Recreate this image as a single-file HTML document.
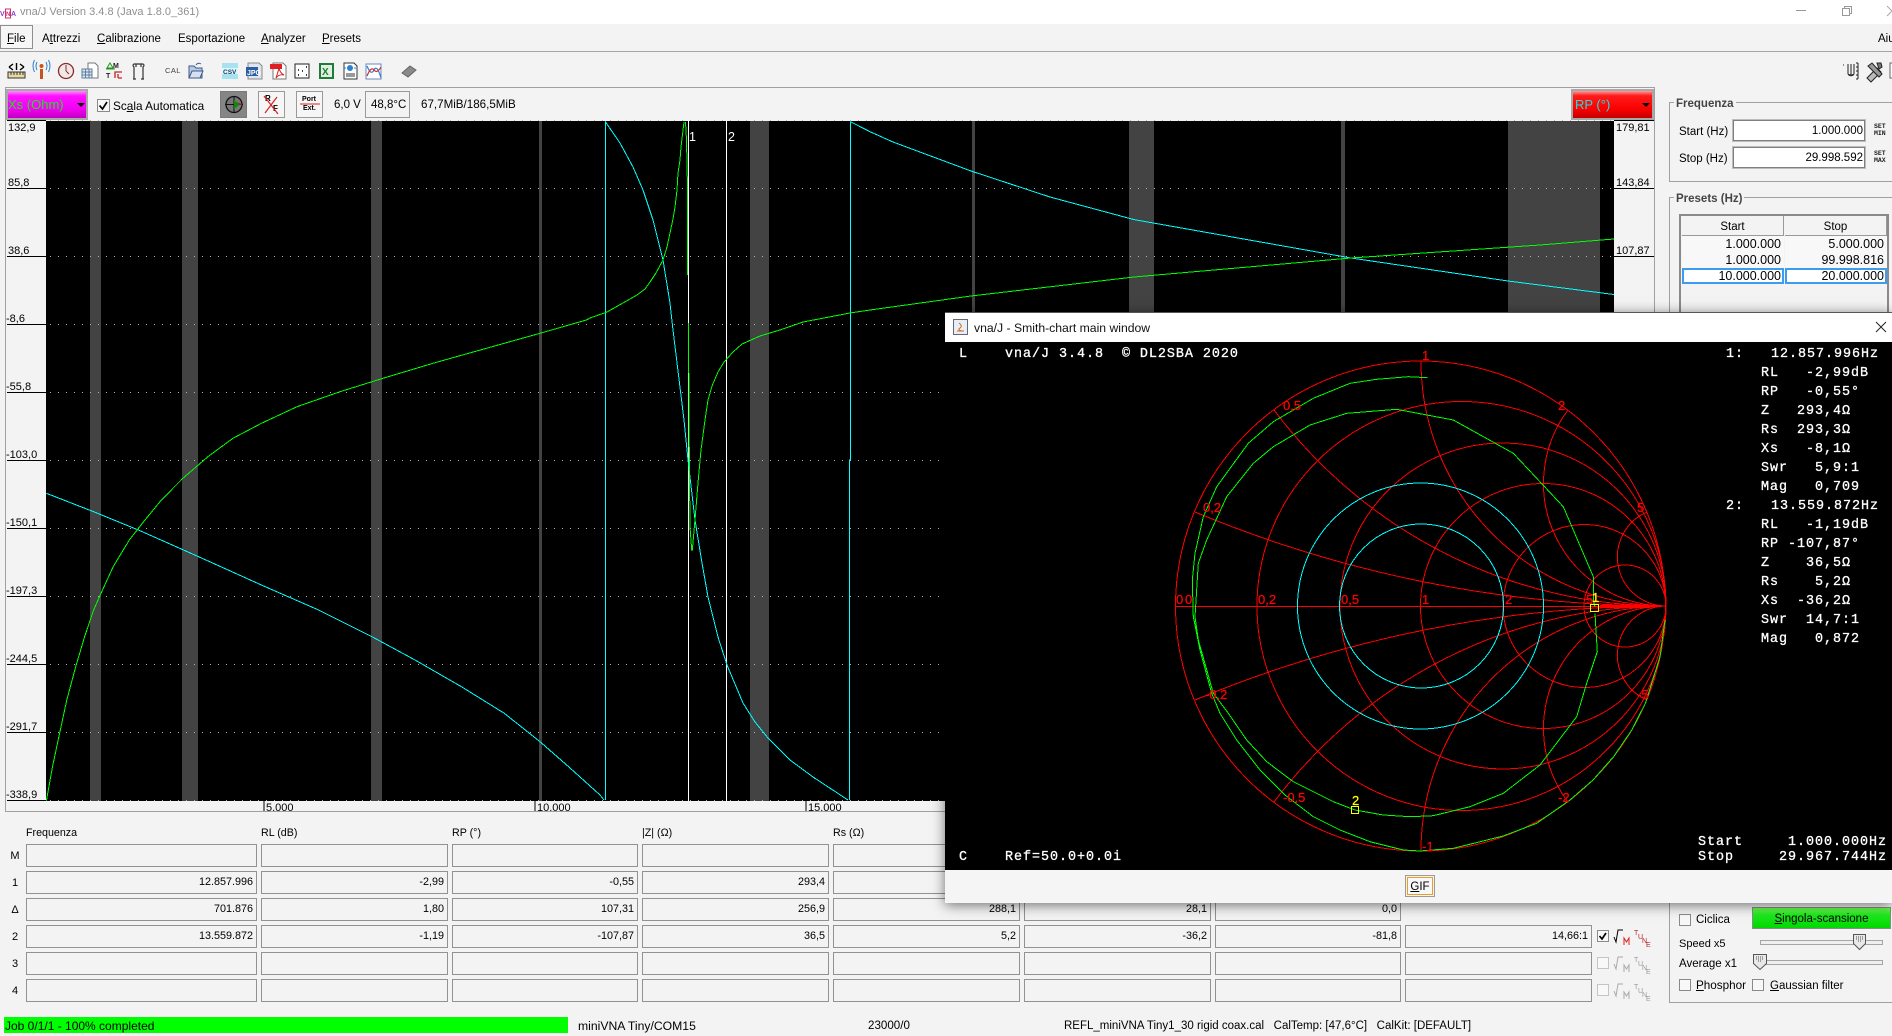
<!DOCTYPE html>
<html><head><meta charset="utf-8"><title>vna/J</title>
<style>
html,body{margin:0;padding:0;width:1892px;height:1036px;overflow:hidden;background:#f3f3f3}
body{position:relative;font-family:"Liberation Sans",sans-serif;font-size:11px;color:#000}
.a{position:absolute;box-sizing:border-box}
.t{position:absolute;white-space:pre;line-height:14px;font-size:11px}
.m{font-size:11.5px;top:32px}
.c{position:absolute;box-sizing:border-box;height:23px;border:1px solid #929292;background:#f3f3f3;text-align:right;padding-right:3px;font-size:10.8px;line-height:21px}
.h{top:826px;font-size:10.7px}
.rl{left:10px;width:10px;text-align:center;font-size:11px}
.cb{position:absolute;box-sizing:border-box;width:13px;height:13px;border:1px solid #8a8a8a;background:#f8f8f8}
.in{position:absolute;box-sizing:border-box;background:#fff;border:1px solid #7f7f7f;outline:1px solid #bdbdbd;text-align:right;padding-right:1px;font-size:11.5px;line-height:21px}
.lg{position:absolute;background:#f3f3f3;padding:0 2px;font-weight:bold;font-size:11.5px;line-height:14px;color:#444;white-space:pre}
.pc{position:absolute;box-sizing:border-box;height:16px;text-align:right;padding-right:3px;font-size:12.5px;line-height:17px;background:#f8f8f8}
svg{position:absolute;left:0;top:0}
.g text{font-family:"Liberation Sans",sans-serif}
.mono text{font-family:"Liberation Mono",monospace;font-size:13.4px;letter-spacing:.96px;fill:#fff;stroke:#fff;stroke-width:.3px;white-space:pre}
.red text{font-family:"Liberation Sans",sans-serif;font-size:13px;fill:#f00;stroke:#f00;stroke-width:.25px}
.red text.y{fill:#ff0;stroke:#ff0}
</style></head><body>

<!-- title bar -->
<div class="a" style="left:0;top:0;width:1892px;height:24px;background:#fff"></div>
<svg width="20" height="24" style="left:0;top:0"><text x="0" y="16" font-size="7" font-weight="bold" fill="#8b3fc4" font-family="Liberation Sans">V</text><rect x="5.5" y="9" width="5" height="9" fill="none" stroke="#d1306a"/><text x="6" y="16" font-size="6" font-weight="bold" fill="#d1306a" font-family="Liberation Sans">N</text><text x="11" y="16" font-size="7" font-weight="bold" fill="#8b3fc4" font-family="Liberation Sans">A</text></svg>
<div class="t" style="left:20px;top:5px;font-size:11px;color:#8f8f8f">vna/J Version 3.4.8 (Java 1.8.0_361)</div>
<svg width="1892" height="24"><path d="M1796 10.5h10" stroke="#999"/><path d="M1842.5 8.5h7v7h-7zM1844.5 8.5v-2h7v7h-2" fill="none" stroke="#999"/><path d="M1887 6l5 5M1887 16l5-5" stroke="#aaa"/></svg>

<!-- menu -->
<div class="a" style="left:0;top:25px;width:33px;height:24px;border:1px solid #8f8f8f;background:#f6f6f6"></div>
<div class="a" style="left:0;top:51px;width:1892px;height:1px;background:#a5a5a5"></div>
<div class="t m" style="left:7px"><u>F</u>ile</div>
<div class="t m" style="left:42px">A<u>t</u>trezzi</div>
<div class="t m" style="left:97px"><u>C</u>alibrazione</div>
<div class="t m" style="left:178px">Esportazione</div>
<div class="t m" style="left:261px"><u>A</u>nalyzer</div>
<div class="t m" style="left:322px"><u>P</u>resets</div>
<div class="t m" style="left:1878px">Aiuto</div>

<!-- toolbar icons -->
<svg width="1892" height="86" class="g">
 <g><path d="M8 72h17v6H8z" fill="#e8d9a0" stroke="#333"/><path d="M11 72v3M14 72v3M17 72v3M20 72v3M23 72v3" stroke="#333"/><path d="M9 67l4-3M9 67l4 3M24 67l-4-3M24 67l-4 3M16.5 63v7" stroke="#000" stroke-width="1.4" fill="none"/></g>
 <g><rect x="40" y="69" width="3" height="10" fill="#c8541c"/><circle cx="41.5" cy="66" r="2" fill="#c8541c"/><path d="M37 62q-2 4 0 8M34.5 60q-3 6 0 12M46 62q2 4 0 8M48.5 60q3 6 0 12" fill="none" stroke="#2c7fcf"/></g>
 <g><circle cx="66" cy="71" r="7.5" fill="#f2e8e8" stroke="#8a2b2b" stroke-width="1.3"/><path d="M66 71v-6M66 71l3 3" stroke="#8a2b2b"/></g>
 <g><path d="M88 63h7l3 3v12H88z" fill="#fff" stroke="#777"/><rect x="82" y="69" width="10" height="9" fill="#dfe7f0" stroke="#5f7f9f"/><path d="M82 72h10M82 75h10M85.5 69v9M89 69v9" stroke="#5f7f9f"/></g>
 <g font-size="7" font-weight="bold"><text x="113" y="68" fill="#222">M</text><path d="M107 68l3-5 3 5z" fill="none" stroke="#1a9c1a"/><path d="M106 69h9" stroke="#1a9c1a"/><text x="106" y="78" fill="#222">T</text><path d="M115 78v-6h7M118 78v-4M122 78h-4" fill="none" stroke="#c22" stroke-width="1.3"/></g>
 <path d="M134 79v-12q-2-2 0-3h9q2 1 0 3v12M133 79h3M141 79h3M136 64v3M141 64v3" fill="none" stroke="#333" stroke-width="1.2"/>
 <text x="165" y="73" font-size="7.5" letter-spacing=".4" fill="#444">CAL</text>
 <g><path d="M189 66h5l2 2h6v10h-13z" fill="#b9c9e3" stroke="#3c5a8a"/><path d="M189 78l3-7h11l-3 7z" fill="#d6e0f0" stroke="#3c5a8a"/><path d="M196 65q2-3 5-1" stroke="#3c5a8a" fill="none"/></g>
 <g><rect x="222" y="63" width="16" height="16" fill="#a6e3ef"/><rect x="222" y="68" width="16" height="6" fill="#dff6fa"/><text x="223" y="74" font-size="6.5" font-weight="bold" fill="#1a3a6a">CSV</text></g>
 <g><path d="M248 63h11l3 3v13h-14z" fill="#dde6f2" stroke="#888"/><rect x="246" y="67" width="12" height="9" fill="#2c5fa0"/><text x="247" y="75" font-size="7" font-weight="bold" fill="#fff">JPG</text></g>
 <g><path d="M273 63h10l3 3v13h-13z" fill="#fff" stroke="#777"/><rect x="270" y="64" width="12" height="5" fill="#e02020"/><path d="M276 78q2-6 3-10q1 5 5 7q-5-1-8 3z" fill="none" stroke="#d02020"/></g>
 <g><rect x="295" y="64" width="14" height="14" fill="#fff" stroke="#222"/><path d="M298 75h1M302 71h1M306 67h1M306 75h1M298 70h1" stroke="#000" stroke-width="1.6"/></g>
 <g><rect x="319" y="63" width="15" height="16" fill="#1f7a3c"/><rect x="321" y="65" width="11" height="12" fill="#dff0df"/><text x="322" y="75" font-size="10" font-weight="bold" fill="#1a7a30">X</text></g>
 <g><path d="M344 63h10l3 3v13h-13z" fill="#fff" stroke="#333"/><circle cx="350" cy="68" r="3" fill="#2c7fcf"/><path d="M346 74h9M346 76h9" stroke="#333"/><path d="M344 68h2M354 68h2" stroke="#2c7fcf"/></g>
 <g><rect x="366" y="64" width="15" height="15" fill="#fff" stroke="#6a8ac0"/><path d="M367 66q4 10 7 4t7 8" fill="none" stroke="#2c7fcf" stroke-width="1.2"/><path d="M367 76q4-10 7-6t7-3" fill="none" stroke="#d03030" stroke-width="1.2"/></g>
 <path d="M402 73l8-7 6 4-8 7z" fill="#8a8a8a" stroke="#666"/>
 <!-- right icons -->
 <g><path d="M1848 64v10M1851 64v10M1854 64v10" stroke="#222" stroke-width="1"/><path d="M1848 74a3.5 3.5 0 0 0 6 0" fill="#555" stroke="#222"/><path d="M1858 63h-2M1858 67h-2M1858 71h-2M1858 75h-2M1858 79h-2M1858 63v16" stroke="#222" fill="none"/><path d="M1843 65h1" stroke="#222"/></g>
 <g><path d="M1867 78l10-10 4 4-10 10z" fill="#bbb" stroke="#222"/><path d="M1868 66l4-3 10 11-3 3z" fill="#999" stroke="#222"/><path d="M1877 63l4 0 1 4-3 2z" fill="#777" stroke="#222"/></g>
 <rect x="1890" y="63" width="6" height="15" fill="#fff" stroke="#666"/>
</svg>

<!-- chart panel -->
<div class="a" style="left:5px;top:87px;width:1650px;height:725px;border:1px solid #a0a0a0;background:#f3f3f3"></div>
<!-- left combo -->
<div class="a" style="left:6px;top:89px;width:82px;height:31px;border:2px solid #a8a8a8;background:linear-gradient(#ff8cff 0,#ff10ff 18%,#f000f0 70%,#c000c0 100%)"></div>
<div class="t" style="left:8px;top:98px;font-size:13px;color:#22e022">Xs (Ohm)</div>
<svg width="100" height="120"><path d="M77 103h8l-4 4z" fill="#000"/></svg>
<div class="cb" style="left:97px;top:99px"></div>
<svg width="120" height="120"><path d="M99.5 105.5l3 3.5 4.5-7" fill="none" stroke="#000" stroke-width="1.7"/></svg>
<div class="t" style="left:113px;top:99px;font-size:11.8px">Sc<u>a</u>la Automatica</div>
<div class="a" style="left:220px;top:91px;width:27px;height:27px;border:1px solid #7a7a7a;background:#858585"></div>
<div class="a" style="left:258px;top:91px;width:27px;height:27px;border:1px solid #9a9a9a;background:#f6f6f6"></div>
<div class="a" style="left:296px;top:91px;width:27px;height:27px;border:1px solid #9a9a9a;background:#f6f6f6"></div>
<svg width="340" height="120" class="g">
 <circle cx="234" cy="104.5" r="8" fill="#777" stroke="#111" stroke-width="1.3"/><path d="M225 104.5h18M234 96v17" stroke="#111"/><path d="M234 100l6 4.5-6 4.5z" fill="#0c8a0c"/><path d="M238 103l4 2" stroke="#c11"/>
 <text x="265" y="101" font-size="8" font-weight="bold">R</text><text x="273" y="111" font-size="8" font-weight="bold">F</text><path d="M264 96l14 18M277 97l-12 16" stroke="#d22" stroke-width="1.2"/>
 <text x="302" y="101" font-size="7" font-weight="bold">Port</text><text x="303" y="110" font-size="7" font-weight="bold">Ext.</text><path d="M300 104h20" stroke="#d22"/>
</svg>
<div class="t" style="left:334px;top:98px;font-size:11.5px">6,0 V</div>
<div class="a" style="left:365px;top:91px;width:45px;height:27px;border:1px solid #9a9a9a"></div>
<div class="t" style="left:371px;top:98px;font-size:11.5px">48,8°C</div>
<div class="t" style="left:421px;top:98px;font-size:11.6px">67,7MiB/186,5MiB</div>
<!-- right combo -->
<div class="a" style="left:1571px;top:89px;width:83px;height:31px;border:2px solid #a8a8a8;background:linear-gradient(#ff9a9a 0,#ff1a1a 18%,#f80000 70%,#c00000 100%)"></div>
<div class="t" style="left:1575px;top:98px;font-size:13px;color:#22dddd">RP (°)</div>
<svg width="1660" height="120"><path d="M1642 103h8l-4 4z" fill="#000"/></svg>

<!-- chart -->
<div class="a" style="left:46px;top:121px;width:1568px;height:680px;background:#000"></div>
<svg width="1892" height="1036" class="g" shape-rendering="crispEdges">
 <g fill="#434343">
  <rect x="90" y="121" width="11" height="680"/><rect x="182" y="121" width="16" height="680"/><rect x="371" y="121" width="11" height="680"/><rect x="539" y="121" width="3" height="680"/><rect x="750" y="121" width="19" height="680"/><rect x="972" y="121" width="3" height="680"/><rect x="1129" y="121" width="25" height="680"/><rect x="1341" y="121" width="4" height="680"/><rect x="1508" y="121" width="92" height="680"/>
 </g>
 <g stroke="#b4b4b4" stroke-dasharray="1 7">
  <path d="M50 120.5H1614M50 188.5H1614M50 256.5H1614M50 324.5H1614M50 392.5H1614M50 460.5H1614M50 528.5H1614M50 596.5H1614M50 664.5H1614M50 732.5H1614M50 800.5H1614"/>
 </g>
 <g stroke="#000">
  <path d="M7 120.5H46M7 188.5H46M7 256.5H46M7 324.5H46M7 392.5H46M7 460.5H46M7 528.5H46M7 596.5H46M7 664.5H46M7 732.5H46M7 800.5H46"/>
  <path d="M1614 120.5H1654M1614 188.5H1654M1614 256.5H1654M1614 324.5H1654M1614 392.5H1654M1614 460.5H1654M1614 528.5H1654M1614 596.5H1654M1614 664.5H1654M1614 732.5H1654M1614 800.5H1654"/>
  <path d="M264 801v10M535 801v10M806 801v10"/>
 </g>
 <g stroke="#fff"><path d="M688.5 121V801M726.5 121V801"/></g>
 <g fill="none" stroke="#00ffff">
  <polyline points="46.4,493.3 93.6,511.7 140,530.7 197,556 261.4,585 318.6,610 372,636.7 415,660 461.4,686.7 504.3,713.3 540,741.7 568.6,766.7 600,795 604,800"/>
  <polyline points="605.5,800 605.5,122 620,143 633,167 643,190 653,220 663,260 670,303 673,330 684,420 688,460 695,520 702,563 708,597 718,637 727,665 743,703 755,722 768,738 790,760 813,777 848,800"/>
  <polyline points="849.5,800 849.5,460 850.5,460 850.5,121.7 870,131.7 893,142 971,171 1050,197 1134,219.6 1255,241 1351,258 1508,281 1614,294.5"/>
 </g>
 <g fill="none" stroke="#00ff00">
  <polyline points="46.4,800.7 52.5,766.7 59.6,733.3 66.8,700 75.7,666.7 84.6,636.7 93.6,610 102.5,590 113.2,566.7 129.3,540 143.6,521.7 161.4,500 182.9,478.3 207.9,456.7 232.9,438.3 261.4,423.3 297,406.7 340,391.7 382.9,378.3 432.9,363.3 486.4,348.3 540,333.3 586.4,320 590,318 607,312 623,303 637,295 645,289 650,282 656,273 663,260 667,247 670,233 673,219 675,207 677,190 678,173 680,160 681,147 684,122"/>
  <polyline points="685.5,122 686.5,140 687.5,188 687.5,275"/>
  <polyline points="688.5,323 689,420 690,527 691.7,550 692.3,550 695,520 698,483 701,450 705,420 708,400 712,386 718,372 724,362 733,352 742,344 760,336 780,330 803,322 850,313 870,310 971,296 1134,277 1351,258 1540,245 1614,239"/>
 </g>
</svg>
<svg width="1892" height="1036" class="g" font-size="11" fill="#000">
 <text x="689" y="141" fill="#fff" font-size="12.5">1</text><text x="728" y="141" fill="#fff" font-size="12.5">2</text>
 <text x="8" y="131">132,9</text><text x="8" y="186">85,8</text><text x="8" y="254">38,6</text><text x="6" y="322">-8,6</text><text x="6" y="390">-55,8</text><text x="6" y="458">-103,0</text><text x="6" y="526">-150,1</text><text x="6" y="594">-197,3</text><text x="6" y="662">-244,5</text><text x="6" y="730">-291,7</text><text x="6" y="798">-338,9</text>
 <text x="1616" y="131">179,81</text><text x="1616" y="186">143,84</text><text x="1616" y="254">107,87</text>
 <text x="266" y="811">5.000</text><text x="537" y="811">10.000</text><text x="808" y="811">15.000</text>
</svg>

<!-- table -->
<div class="t h" style="left:26px">Frequenza</div><div class="t h" style="left:261px">RL (dB)</div><div class="t h" style="left:452px">RP (°)</div><div class="t h" style="left:642px">|Z| (Ω)</div><div class="t h" style="left:833px">Rs (Ω)</div>
<div class="t rl" style="top:849px">M</div><div class="t rl" style="top:876px">1</div><div class="t rl" style="top:903px">Δ</div><div class="t rl" style="top:930px">2</div><div class="t rl" style="top:957px">3</div><div class="t rl" style="top:984px">4</div>

<!-- row M -->
<div class="c" style="left:26px;width:231px;top:844px"></div><div class="c" style="left:261px;width:187px;top:844px"></div><div class="c" style="left:452px;width:186px;top:844px"></div><div class="c" style="left:642px;width:187px;top:844px"></div><div class="c" style="left:833px;width:187px;top:844px"></div>
<!-- row 1 -->
<div class="c" style="left:26px;width:231px;top:871px">12.857.996</div><div class="c" style="left:261px;width:187px;top:871px">-2,99</div><div class="c" style="left:452px;width:186px;top:871px">-0,55</div><div class="c" style="left:642px;width:187px;top:871px">293,4</div><div class="c" style="left:833px;width:187px;top:871px"></div>
<!-- row delta -->
<div class="c" style="left:26px;width:231px;top:898px">701.876</div><div class="c" style="left:261px;width:187px;top:898px">1,80</div><div class="c" style="left:452px;width:186px;top:898px">107,31</div><div class="c" style="left:642px;width:187px;top:898px">256,9</div><div class="c" style="left:833px;width:187px;top:898px">288,1</div><div class="c" style="left:1024px;width:187px;top:898px">28,1</div><div class="c" style="left:1215px;width:186px;top:898px">0,0</div>
<!-- row 2 -->
<div class="c" style="left:26px;width:231px;top:925px">13.559.872</div><div class="c" style="left:261px;width:187px;top:925px">-1,19</div><div class="c" style="left:452px;width:186px;top:925px">-107,87</div><div class="c" style="left:642px;width:187px;top:925px">36,5</div><div class="c" style="left:833px;width:187px;top:925px">5,2</div><div class="c" style="left:1024px;width:187px;top:925px">-36,2</div><div class="c" style="left:1215px;width:186px;top:925px">-81,8</div><div class="c" style="left:1405px;width:187px;top:925px">14,66:1</div>
<!-- row 3 -->
<div class="c" style="left:26px;width:231px;top:952px"></div><div class="c" style="left:261px;width:187px;top:952px"></div><div class="c" style="left:452px;width:186px;top:952px"></div><div class="c" style="left:642px;width:187px;top:952px"></div><div class="c" style="left:833px;width:187px;top:952px"></div><div class="c" style="left:1024px;width:187px;top:952px"></div><div class="c" style="left:1215px;width:186px;top:952px"></div><div class="c" style="left:1405px;width:187px;top:952px"></div>
<!-- row 4 -->
<div class="c" style="left:26px;width:231px;top:979px"></div><div class="c" style="left:261px;width:187px;top:979px"></div><div class="c" style="left:452px;width:186px;top:979px"></div><div class="c" style="left:642px;width:187px;top:979px"></div><div class="c" style="left:833px;width:187px;top:979px"></div><div class="c" style="left:1024px;width:187px;top:979px"></div><div class="c" style="left:1215px;width:186px;top:979px"></div><div class="c" style="left:1405px;width:187px;top:979px"></div>

<div class="cb" style="left:1597px;top:930px;width:12px;height:12px"></div>
<div class="cb" style="left:1597px;top:957px;width:12px;height:12px;border-color:#c4c4c4"></div>
<div class="cb" style="left:1597px;top:984px;width:12px;height:12px;border-color:#c4c4c4"></div>
<svg width="1892" height="1036" class="g">
 <path d="M1599.5 936l2.5 3 4-6" fill="none" stroke="#000" stroke-width="1.7"/>
 <g><path d="M1614 937l2 5 2-12h5" fill="none" stroke="#000"/><path d="M1624 945v-7l2.5 4 2.5-4v7" fill="none" stroke="#d22"/><text x="1634" y="935" font-size="7" fill="#b22">T</text><text x="1638" y="939" font-size="7" fill="#b22">U</text><text x="1642" y="943" font-size="7" fill="#b22">N</text><text x="1646" y="947" font-size="7" fill="#b22">E</text></g>
 <g><path d="M1614 964l2 5 2-12h5" fill="none" stroke="#aaa"/><path d="M1624 972v-7l2.5 4 2.5-4v7" fill="none" stroke="#aaa"/><text x="1634" y="962" font-size="7" fill="#999">T</text><text x="1638" y="966" font-size="7" fill="#999">U</text><text x="1642" y="970" font-size="7" fill="#999">N</text><text x="1646" y="974" font-size="7" fill="#999">E</text></g>
 <g><path d="M1614 991l2 5 2-12h5" fill="none" stroke="#aaa"/><path d="M1624 999v-7l2.5 4 2.5-4v7" fill="none" stroke="#aaa"/><text x="1634" y="989" font-size="7" fill="#999">T</text><text x="1638" y="993" font-size="7" fill="#999">U</text><text x="1642" y="997" font-size="7" fill="#999">N</text><text x="1646" y="1001" font-size="7" fill="#999">E</text></g>
</svg>

<!-- status -->
<div class="a" style="left:4px;top:1017px;width:564px;height:16px;background:#00ff00"></div>
<div class="t" style="left:5px;top:1019px;font-size:12px">Job 0/1/1 - 100% completed</div>
<div class="t" style="left:578px;top:1019px;font-size:12.2px">miniVNA Tiny/COM15</div>
<div class="t" style="left:868px;top:1019px;font-size:11.6px">23000/0</div>
<div class="t" style="left:1064px;top:1019px;font-size:11.5px">REFL_miniVNA Tiny1_30 rigid coax.cal   CalTemp: [47,6°C]   CalKit: [DEFAULT]</div>

<!-- right panel: Frequenza -->
<div class="a" style="left:1669px;top:102px;width:240px;height:80px;border:1px solid #a0a0a0"></div>
<div class="lg" style="left:1674px;top:97px">Frequenza</div>
<div class="t" style="left:1679px;top:125px;font-size:11.5px">Start (Hz)</div>
<div class="in" style="left:1733px;top:120px;width:132px;height:21px">1.000.000</div>
<div class="t" style="left:1679px;top:152px;font-size:11.5px">Stop (Hz)</div>
<div class="in" style="left:1733px;top:147px;width:132px;height:21px">29.998.592</div>
<svg width="1892" height="180"><g font-family="Liberation Mono" font-size="6.5" font-weight="bold" fill="#222"><text x="1874" y="128">SET</text><text x="1874" y="135">MIN</text><text x="1874" y="155">SET</text><text x="1874" y="162">MAX</text></g></svg>

<!-- Presets -->
<div class="a" style="left:1669px;top:197px;width:240px;height:200px;border:1px solid #a0a0a0"></div>
<div class="lg" style="left:1674px;top:192px">Presets (Hz)</div>
<div class="a" style="left:1679px;top:214px;width:210px;height:110px;border:2px solid #8a8a8a;background:#f3f3f3"></div>
<div class="a" style="left:1682px;top:216px;width:102px;height:20px;background:#f3f3f3;border-right:1px solid #999;border-bottom:1px solid #999;text-align:center;font-size:11.5px;line-height:22px">Start</div>
<div class="a" style="left:1785px;top:216px;width:102px;height:20px;background:#f3f3f3;border-right:1px solid #999;border-bottom:1px solid #999;text-align:center;font-size:11.5px;line-height:22px">Stop</div>
<div class="pc" style="left:1682px;top:236px;width:102px">1.000.000</div><div class="pc" style="left:1785px;top:236px;width:102px">5.000.000</div>
<div class="pc" style="left:1682px;top:252px;width:102px">1.000.000</div><div class="pc" style="left:1785px;top:252px;width:102px">99.998.816</div>
<div class="pc" style="left:1682px;top:268px;width:102px;border:2px solid #3d9bf0;line-height:13px;padding-right:1px;background:#fff">10.000.000</div><div class="pc" style="left:1785px;top:268px;width:102px;border:2px solid #3d9bf0;line-height:13px;padding-right:1px;background:#fff">20.000.000</div>

<!-- scan panel -->
<div class="a" style="left:1669px;top:880px;width:240px;height:123px;border:1px solid #a0a0a0"></div>
<div class="cb" style="left:1679px;top:914px;width:12px;height:12px"></div>
<div class="t" style="left:1696px;top:913px;font-size:11.5px">Ciclica</div>
<div class="a" style="left:1752px;top:907px;width:139px;height:22px;border:1px solid #8a8a8a;background:linear-gradient(#6dff4d 0,#1ee81e 35%,#00d800 100%);text-align:center;font-size:11.5px;line-height:23px"><u>S</u>ingola-scansione</div>
<div class="t" style="left:1679px;top:937px;font-size:11px">Speed x5</div>
<div class="a" style="left:1760px;top:940px;width:123px;height:5px;border:1px solid #a5a5a5;background:#efefef"></div>
<div class="a" style="left:1760px;top:960px;width:123px;height:5px;border:1px solid #a5a5a5;background:#efefef"></div>
<svg width="1892" height="1036"><path d="M1853.5 934.5h12v9l-6 6-6-6z" fill="#e8e8e8" stroke="#555"/><path d="M1753.5 954.5h13v9l-6.5 6-6.5-6z" fill="#e8e8e8" stroke="#555"/><path d="M1856 937h7M1856 939h7M1858 941h4M1756 957h8M1756 959h8M1758 961h4" stroke="#555" stroke-dasharray="1 1"/></svg>
<div class="t" style="left:1679px;top:957px;font-size:11.5px">Average x1</div>
<div class="cb" style="left:1679px;top:979px;width:12px;height:12px"></div>
<div class="t" style="left:1696px;top:979px;font-size:11.7px"><u>P</u>hosphor</div>
<div class="cb" style="left:1752px;top:979px;width:12px;height:12px"></div>
<div class="t" style="left:1770px;top:979px;font-size:11.5px"><u>G</u>aussian filter</div>

<!-- Smith window -->
<div class="a" style="left:945px;top:312px;width:947px;height:591px;background:#f5f5f5;box-shadow:0 2px 12px rgba(0,0,0,.55);border-top:1px solid #555"></div>
<div class="a" style="left:945px;top:313px;width:947px;height:29px;background:#fff"></div>
<svg width="1892" height="345">
 <rect x="953.5" y="319.5" width="14" height="15" fill="#e8eef5" stroke="#667"/><path d="M959 323q4 3 1 5q-3 2 2 3M957 331h7" stroke="#d8691c" fill="none"/>
 <path d="M1876 322l10 10M1886 322l-10 10" stroke="#222"/>
</svg>
<div class="t" style="left:974px;top:321px;font-size:12.2px;color:#111">vna/J - Smith-chart main window</div>
<div class="a" style="left:945px;top:342px;width:947px;height:528px;background:#000"></div>
<div class="a" style="left:1405px;top:875px;width:30px;height:22px;border:1px solid #9a9a9a;background:#f5f5f5"></div>
<div class="a" style="left:1407px;top:877px;width:26px;height:18px;border:1px solid #e8a020;text-align:center;font-size:11.5px;line-height:18px;background:#f8f8f8"><u>G</u>IF</div>

<svg width="1892" height="1036" shape-rendering="crispEdges" fill="none" stroke="#f00">
 <circle cx="1420.5" cy="606" r="245" />
 <circle cx="1461.5" cy="606" r="204.5"/><circle cx="1503" cy="606" r="163"/><circle cx="1543" cy="606" r="122.5"/><circle cx="1584.5" cy="606" r="81.5"/><circle cx="1625" cy="606" r="41"/>
 <path d="M1175 606.5H1662"/>
 <path d="M1421 361A245 245 0 0 0 1666 606M1568 410A122.5 122.5 0 0 0 1666 606M1647 512A49 49 0 0 0 1666 606M1274 410A490 490 0 0 0 1666 606M1195 512A1225 1225 0 0 0 1666 606"/>
 <path d="M1421 851A245 245 0 0 1 1666 606M1568 802A122.5 122.5 0 0 1 1666 606M1647 700A49 49 0 0 1 1666 606M1274 802A490 490 0 0 1 1666 606M1195 700A1225 1225 0 0 1 1666 606"/>
 <path d="M1600 605.5H1655M1600 607.5H1650" stroke-width="1"/>
 <g stroke="#00ffff"><circle cx="1420.5" cy="606" r="123"/><circle cx="1421.5" cy="606" r="82"/></g>
 <g stroke="#00ff00">
  <polyline points="1427.3,377.7 1408.3,376.7 1376.7,379.3 1350,383.3 1313.3,398.3 1273.3,421.7 1248.3,443.3 1216.7,486.7 1203.3,516.7 1195,553.3 1192.3,580 1193.3,616.7 1194,620 1200,650 1211.7,693.3 1220,713.3 1236.7,740 1260,770 1285,795 1313.3,816.7 1340,830 1370,841.7 1403.3,850 1420,851 1453.3,848.3 1503.3,836 1536.7,823.3 1570,800 1593,780 1613.6,756.7 1631.8,730 1645.5,703 1660,657 1665,620"/>
  <polyline points="1595,606.7 1593.3,600 1593.3,576.7 1563.3,506.7 1513.3,453.3 1453.3,420 1396.7,409.3 1346.7,413.3 1310,425 1273.3,446.7 1253.3,463.3 1226.7,496.7 1206.7,540 1198.3,563.3 1195,616.7 1198.3,640 1213.3,693.3 1228.3,713.3 1246.7,740 1266.7,761.7 1293.3,781.7 1333.3,801.7 1355,810 1383.3,815 1410,816.7 1433.3,815.7 1470,806.7 1503.3,793.3 1540,765 1576.7,716.7 1586.7,683.3 1597.3,651.7 1595,613.3"/>
 </g>
 <g stroke="#ffff00"><rect x="1590.5" y="604.5" width="8" height="7"/><rect x="1351.5" y="806.5" width="7" height="7"/></g>
</svg>
<svg width="1892" height="1036" class="red">
 <text x="1283" y="410">0,5</text><text x="1203" y="512">0,2</text><text x="1422" y="360">1</text><text x="1558" y="410">2</text><text x="1637" y="512">5</text>
 <text x="1205" y="699">-0,2</text><text x="1283" y="802">-0,5</text><text x="1422" y="851">-1</text><text x="1558" y="802">-2</text><text x="1637" y="699">-5</text>
 <text x="1176" y="604">0</text><text x="1185" y="604">0</text><text x="1258" y="604">0,2</text><text x="1341" y="604">0,5</text><text x="1422" y="604">1</text><text x="1505" y="604">2</text><text x="1586" y="604">5</text>
 <text class="y" x="1592" y="602">1</text><text class="y" x="1352" y="805">2</text>
</svg>
<svg width="1892" height="1036" class="mono">
 <text x="959" y="357">L</text><text x="1005" y="357">vna/J 3.4.8  © DL2SBA 2020</text>
 <text x="959" y="860">C</text><text x="1005" y="860">Ref=50.0+0.0i</text>
 <text x="1698" y="845">Start</text><text x="1788" y="845">1.000.000Hz</text>
 <text x="1698" y="860">Stop</text><text x="1779" y="860">29.967.744Hz</text>
 <text x="1726" y="357">1:</text><text x="1771" y="357">12.857.996Hz</text>
 <text x="1761" y="376">RL   -2,99dB</text>
 <text x="1761" y="395">RP   -0,55°</text>
 <text x="1761" y="414">Z   293,4Ω</text>
 <text x="1761" y="433">Rs  293,3Ω</text>
 <text x="1761" y="452">Xs   -8,1Ω</text>
 <text x="1761" y="471">Swr   5,9:1</text>
 <text x="1761" y="490">Mag   0,709</text>
 <text x="1726" y="509">2:</text><text x="1771" y="509">13.559.872Hz</text>
 <text x="1761" y="528">RL   -1,19dB</text>
 <text x="1761" y="547">RP -107,87°</text>
 <text x="1761" y="566">Z    36,5Ω</text>
 <text x="1761" y="585">Rs    5,2Ω</text>
 <text x="1761" y="604">Xs  -36,2Ω</text>
 <text x="1761" y="623">Swr  14,7:1</text>
 <text x="1761" y="642">Mag   0,872</text>
</svg>
</body></html>
